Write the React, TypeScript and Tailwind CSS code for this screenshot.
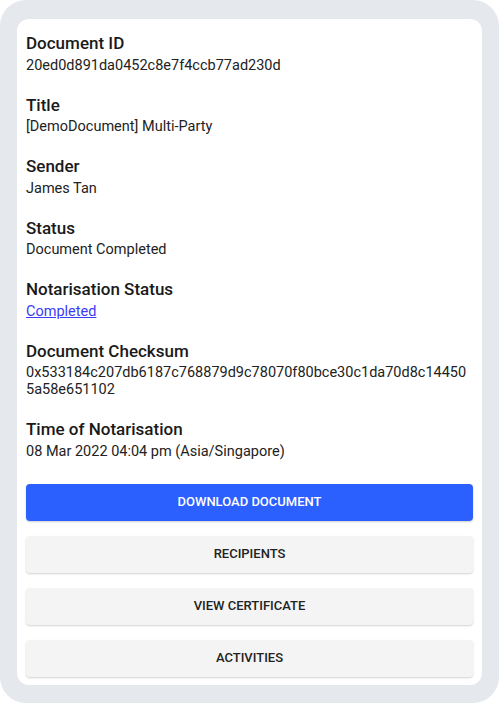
const fields: { label: string; value: string; link?: boolean }[] = [
  { label: "Document ID", value: "20ed0d891da0452c8e7f4ccb77ad230d" },
  { label: "Title", value: "[DemoDocument] Multi-Party" },
  { label: "Sender", value: "James Tan" },
  { label: "Status", value: "Document Completed" },
  { label: "Notarisation Status", value: "Completed", link: true },
  {
    label: "Document Checksum",
    value: "0x533184c207db6187c768879d9c78070f80bce30c1da70d8c144505a58e651102",
  },
  { label: "Time of Notarisation", value: "08 Mar 2022 04:04 pm (Asia/Singapore)" },
];

const secondary = ["Recipients", "View Certificate", "Activities"];

export default function App() {
  return (
    <div className="min-h-screen bg-white font-['Roboto','Liberation_Sans',sans-serif]">
      <div className="w-[499px] h-[703px] rounded-[26px] bg-[#e5e8ec] pt-[19px] px-[17px]">
        <div className="h-[666px] rounded-[12px] bg-white px-[9px] pt-[14px]">
          {fields.map((f) => (
            <div key={f.label} className="mb-[21px]">
              <h3 className="text-[17px] leading-[20px] font-medium text-[#1a1a1a]">
                {f.label}
              </h3>
              {f.link ? (
                <a href="#" className="mt-[3.5px] block w-fit text-[14.5px] leading-[17px] text-[#3b3bf5] underline">
                  {f.value}
                </a>
              ) : (
                <p className="mt-[3.5px] text-[14.5px] leading-[17px] text-[#222] break-all">{f.value}</p>
              )}
            </div>
          ))}

          <div className="mt-[24px] flex flex-col gap-[15px]">
            <button className="h-[37px] w-full rounded-[4px] bg-[#2b60ff] text-[13px] font-medium uppercase text-white shadow-[0_1px_2px_rgba(0,0,0,0.2)]">
              Download Document
            </button>
            {secondary.map((s) => (
              <button
                key={s}
                className="h-[37px] w-full rounded-[4px] bg-[#f4f4f4] text-[13px] font-medium uppercase text-[#222] shadow-[0_1px_2px_rgba(0,0,0,0.18)]"
              >
                {s}
              </button>
            ))}
          </div>
        </div>
      </div>
    </div>
  );
}
